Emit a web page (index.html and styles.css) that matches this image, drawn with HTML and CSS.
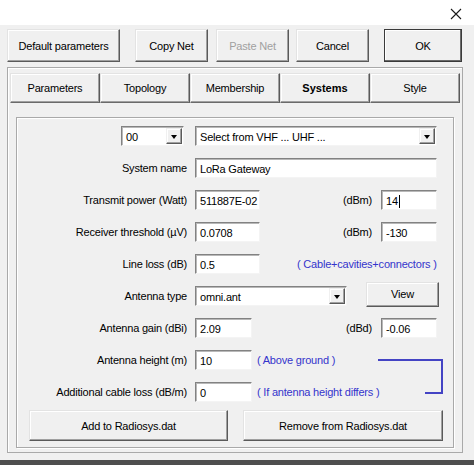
FILE: index.html
```html
<!DOCTYPE html>
<html lang="en">
  <head>
    <meta charset="UTF-8" />
    <title>Systems</title>
    <link rel="stylesheet" href="styles.css">
  </head>
  <body>
    <div class="titlebar">
      <svg class="close" width="12" height="12" viewBox="0 0 12 12">
        <path d="M1 1 L11 11 M11 1 L1 11" stroke="#1a1a1a" stroke-width="1.1" />
      </svg>
    </div>

    <div class="window">
      <div class="toolbar">
        <button class="btn btn-defaults">Default parameters</button>
        <button class="btn btn-copy">Copy Net</button>
        <button class="btn btn-paste" disabled>Paste Net</button>
        <button class="btn btn-cancel">Cancel</button>
        <button class="btn btn-ok">OK</button>
      </div>

      <div class="panel">
        <div class="tabs">
          <div class="tab">Parameters</div>
          <div class="tab">Topology</div>
          <div class="tab">Membership</div>
          <div class="tab active">Systems</div>
          <div class="tab">Style</div>
        </div>

        <div class="page">
          <div class="row row-select">
            <div class="combo combo-index">
              <span class="combo-text">00</span>
              <span class="combo-arrow"></span>
            </div>
            <div class="combo combo-system">
              <span class="combo-text">Select from VHF ... UHF ...</span>
              <span class="combo-arrow"></span>
            </div>
          </div>

          <div class="row">
            <label class="label">System name</label>
            <div class="field field-wide">LoRa Gateway</div>
          </div>

          <div class="row">
            <label class="label">Transmit power (Watt)</label>
            <div class="field field-mid">511887E-02</div>
            <span class="unit unit-mid">(dBm)</span>
            <div class="field field-unit">14<span class="caret"></span></div>
          </div>

          <div class="row">
            <label class="label">Receiver threshold (µV)</label>
            <div class="field field-mid">0.0708</div>
            <span class="unit unit-mid">(dBm)</span>
            <div class="field field-unit">-130</div>
          </div>

          <div class="row">
            <label class="label">Line loss (dB)</label>
            <div class="field field-mid">0.5</div>
            <span class="note note-cable">( Cable+cavities+connectors )</span>
          </div>

          <div class="row">
            <label class="label">Antenna type</label>
            <div class="combo combo-antenna">
              <span class="combo-text">omni.ant</span>
              <span class="combo-arrow"></span>
            </div>
            <button class="btn btn-view">View</button>
          </div>

          <div class="row">
            <label class="label">Antenna gain (dBi)</label>
            <div class="field field-short">2.09</div>
            <span class="unit unit-short">(dBd)</span>
            <div class="field field-unit">-0.06</div>
          </div>

          <div class="pair">
            <div class="pair-rows">
              <div class="row">
                <label class="label">Antenna height (m)</label>
                <div class="field field-short">10</div>
                <span class="note">( Above ground )</span>
              </div>
              <div class="row">
                <label class="label">Additional cable loss (dB/m)</label>
                <div class="field field-short">0</div>
                <span class="note">( If antenna height differs )</span>
              </div>
            </div>
            <div class="bracket">
              <div class="bracket-top"></div>
              <div class="bracket-bottom"></div>
            </div>
          </div>

          <div class="actions">
            <button class="btn btn-add">Add to Radiosys.dat</button>
            <button class="btn btn-remove">Remove from Radiosys.dat</button>
          </div>
        </div>
      </div>
    </div>

    <div class="statusbar"></div>
  </body>
</html>
```

FILE: styles.css
```css
* {
  box-sizing: border-box;
}

body {
  margin: 0;
  width: 474px;
  height: 465px;
  overflow: hidden;
  background-color: #f0f0f0;
  font-family: "Liberation Sans", Arial, sans-serif;
  font-size: 11px;
  letter-spacing: -0.2px;
  color: #000;
}

.titlebar {
  height: 25px;
  background-color: #fff;
  display: flex;
  justify-content: flex-end;
  align-items: center;
  padding-right: 12px;
}

.close {
  display: block;
  margin-top: 2px;
}

.window {
  padding-left: 7px;
}

/* Buttons */
.btn {
  font: inherit;
  letter-spacing: inherit;
  color: #000;
  background-color: #f0f0f0;
  border: 1px solid;
  border-color: #e3e3e3 #5a5a5a #5a5a5a #e3e3e3;
  box-shadow: inset -1px -1px #a0a0a0, inset 1px 1px #fff;
  padding: 0;
  cursor: pointer;
}

.btn:disabled {
  color: #a0a0a0;
  cursor: default;
}

.toolbar {
  display: flex;
  margin-top: 4px;
  height: 33px;
}

.toolbar .btn {
  height: 33px;
}

.btn-defaults {
  width: 113px;
}

.btn-copy {
  width: 73px;
  margin-left: 15px;
}

.btn-paste {
  width: 73px;
  margin-left: 8px;
}

.btn-cancel {
  width: 73px;
  margin-left: 7px;
}

.btn-ok {
  width: 78px;
  margin-left: 15px;
  border-color: #3a3a3a;
  box-shadow: inset -1px -1px #6a6a6a, inset 1px 1px #fff;
}

/* Tab control */
.panel {
  margin-top: 5px;
  width: 456px;
  height: 386px;
  border: 1px solid #a9a9a9;
  box-shadow: inset 1px 1px #fff;
  padding: 5px 0 0 2px;
}

.tabs {
  display: flex;
  height: 30px;
}

.tab {
  width: 90px;
  display: flex;
  align-items: center;
  justify-content: center;
  border: 1px solid;
  border-color: #e3e3e3 #5a5a5a #6a6a6a #e3e3e3;
  box-shadow: inset -1px -1px #a0a0a0, inset 1px 1px #fff;
}

.tab.active {
  font-weight: bold;
  letter-spacing: 0;
}

.page {
  margin: 14px 0 0 6px;
  width: 438px;
  height: 331px;
  border: 1px solid #a9a9a9;
  box-shadow: inset 1px 1px #fff, 1px 1px #fff;
  padding-top: 8px;
  display: flex;
  flex-direction: column;
  gap: 12px;
}

/* Form rows */
.row {
  display: flex;
  align-items: center;
  height: 20px;
  white-space: nowrap;
}

.row-select {
  padding-left: 104px;
}

.label {
  width: 170px;
  text-align: right;
  margin-right: 8px;
  flex-shrink: 0;
}

.field {
  height: 20px;
  background-color: #fff;
  border: 1px solid;
  border-color: #828282 #f4f4f4 #f4f4f4 #828282;
  box-shadow: inset 1px 1px #b8b8b8;
  padding: 2px 0 0 4px;
  flex-shrink: 0;
  display: flex;
  align-items: center;
  line-height: 14px;
}

.field-wide {
  width: 242px;
}

.field-mid {
  width: 65px;
}

.field-short {
  width: 57px;
}

.field-unit {
  width: 56px;
  margin-left: 9px;
}

.caret {
  display: inline-block;
  width: 1px;
  height: 13px;
  background-color: #000;
  margin-left: 1px;
}

.unit {
  text-align: right;
  flex-shrink: 0;
}

.unit-mid {
  width: 112px;
}

.unit-short {
  width: 120px;
}

.note {
  color: #3434cc;
  margin-left: 5px;
}

.note-cable {
  margin-left: 37px;
}

/* Drop-down boxes */
.combo {
  height: 20px;
  display: flex;
  align-items: center;
  justify-content: space-between;
  background-color: #fff;
  border: 1px solid;
  border-color: #828282 #f4f4f4 #f4f4f4 #828282;
  box-shadow: inset 1px 1px #b8b8b8;
  padding: 2px 1px 1px 4px;
  flex-shrink: 0;
}

.combo-index {
  width: 63px;
}

.combo-system {
  width: 242px;
  margin-left: 11px;
}

.combo-antenna {
  width: 152px;
}

.combo-arrow {
  width: 16px;
  height: 16px;
  margin-top: -1px;
  background-color: #f0f0f0;
  border: 1px solid;
  border-color: #f0f0f0 #5a5a5a #5a5a5a #f0f0f0;
  box-shadow: inset -1px -1px #a0a0a0, inset 1px 1px #fff;
  display: flex;
  align-items: center;
  justify-content: center;
}

.combo-arrow::after {
  content: "";
  border-left: 3.5px solid transparent;
  border-right: 3.5px solid transparent;
  border-top: 4px solid #000;
  margin-top: 1px;
}

.btn-view {
  width: 73px;
  height: 25px;
  margin-left: 19px;
  margin-top: -4px;
}

/* Bracket joining the height rows */
.pair {
  display: flex;
}

.pair-rows {
  width: 361px;
  display: flex;
  flex-direction: column;
  gap: 12px;
}

.bracket {
  width: 65px;
  margin-top: 9px;
  display: flex;
  flex-direction: column;
  align-items: flex-end;
}

.bracket-top {
  width: 65px;
  height: 33px;
  border-top: 2px solid #4444c4;
  border-right: 2px solid #4444c4;
}

.bracket-bottom {
  width: 18px;
  height: 2px;
  background-color: #4444c4;
}

.actions {
  display: flex;
  margin-top: -4px;
  padding-left: 12px;
}

.actions .btn {
  height: 31px;
}

.btn-add {
  width: 199px;
}

.btn-remove {
  width: 200px;
  margin-left: 15px;
}

.statusbar {
  margin-top: 7px;
  height: 10px;
  background-color: #4e4e4e;
}
```
